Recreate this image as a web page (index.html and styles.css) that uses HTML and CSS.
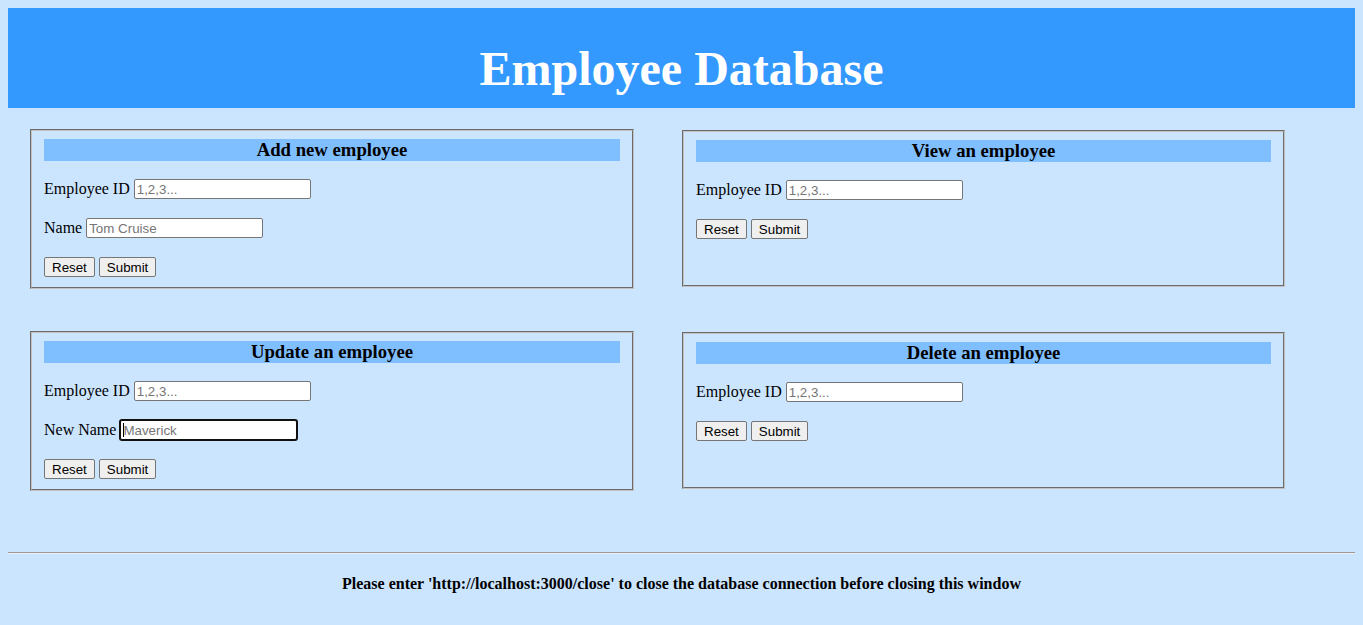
FILE: index.html
```html
<!DOCTYPE html>
<html lang="en">
<head>
<meta charset="utf-8">
<title>Employee Database</title>
<link rel="stylesheet" href="styles.css">
</head>
<body>
<header class="banner">
  <h1 class="title">Employee Database</h1>
</header>

<main class="panels">
  <form class="card">
    <h3 class="card-title">Add new employee</h3>
    <div class="row"><label>Employee ID</label><input class="field" type="text" placeholder="1,2,3..."></div>
    <div class="row"><label>Name</label><input class="field" type="text" placeholder="Tom Cruise"></div>
    <div class="row"><button class="btn" type="reset">Reset</button><button class="btn" type="button">Submit</button></div>
  </form>

  <form class="card card-right">
    <h3 class="card-title">View an employee</h3>
    <div class="row"><label>Employee ID</label><input class="field" type="text" placeholder="1,2,3..."></div>
    <div class="row"><button class="btn" type="reset">Reset</button><button class="btn" type="button">Submit</button></div>
  </form>

  <form class="card">
    <h3 class="card-title">Update an employee</h3>
    <div class="row"><label>Employee ID</label><input class="field" type="text" placeholder="1,2,3..."></div>
    <div class="row"><label>New Name</label><span class="field-wrap"><input class="field field-focus" type="text" placeholder="Maverick"><span class="caret"></span></span></div>
    <div class="row"><button class="btn" type="reset">Reset</button><button class="btn" type="button">Submit</button></div>
  </form>

  <form class="card card-right">
    <h3 class="card-title">Delete an employee</h3>
    <div class="row"><label>Employee ID</label><input class="field" type="text" placeholder="1,2,3..."></div>
    <div class="row"><button class="btn" type="reset">Reset</button><button class="btn" type="button">Submit</button></div>
  </form>
</main>

<hr class="divider">
<h4 class="note">Please enter 'http://localhost:3000/close' to close the database connection before closing this window</h4>
</body>
</html>
```

FILE: styles.css
```css
html, body {
  background: #cce5ff;
}

body {
  margin: 8px;
  font-family: "Liberation Serif", "Times New Roman", serif;
  font-size: 16px;
  color: #000;
}

.banner {
  background: #3399ff;
  height: 100px;
  box-sizing: border-box;
  padding-top: 33px;
}

.title {
  margin: 0;
  font-size: 48px;
  line-height: 55px;
  font-weight: bold;
  color: #fff;
  text-align: center;
}

.panels {
  display: grid;
  grid-template-columns: 604px 603px;
  column-gap: 48px;
  row-gap: 42px;
  align-items: start;
  margin-top: 21px;
  padding-left: 22px;
}

.card {
  margin: 0;
  box-sizing: border-box;
  border: 2px groove rgb(192, 192, 192);
  padding: 8px 12px 10px;
}

.card-right {
  margin-top: 1px;
  height: 157px;
}

.card-title {
  margin: 0 0 18px;
  background: #80bfff;
  font-size: 18.72px;
  line-height: 22px;
  height: 22px;
  font-weight: bold;
  text-align: center;
}

.row {
  display: flex;
  align-items: baseline;
  gap: 4px;
  height: 20px;
}

.row + .row {
  margin-top: 19px;
}

.field-wrap {
  position: relative;
  display: inline-flex;
}

.field {
  box-sizing: border-box;
  width: 177px;
  height: 20px;
  margin: 0;
  padding: 1px 2px;
  border: 1px solid #767676;
  border-radius: 2px;
  background: #fff;
  font-family: "Liberation Sans", Arial, sans-serif;
  font-size: 13.33px;
  color: #000;
}

.field::placeholder {
  color: #757575;
}

.field-focus {
  border-color: #101010;
  box-shadow: 0 0 0 1px #101010;
  outline: none;
}

.caret {
  position: absolute;
  left: 3px;
  top: 3px;
  width: 1px;
  height: 14px;
  background: #000;
}

.btn {
  box-sizing: border-box;
  height: 20px;
  margin: 0;
  padding: 1px 7px;
  border: 1px solid #767676;
  border-radius: 2px;
  background: #efefef;
  font-family: "Liberation Sans", Arial, sans-serif;
  font-size: 13.33px;
  color: #000;
}

.divider {
  margin: 61px 0 0;
  border: 0;
  border-top: 1px solid #9a9a9a;
  border-bottom: 1px solid #eeeeee;
  height: 0;
}

.note {
  margin: 21px 0;
  font-size: 16px;
  font-weight: bold;
  text-align: center;
}
```
